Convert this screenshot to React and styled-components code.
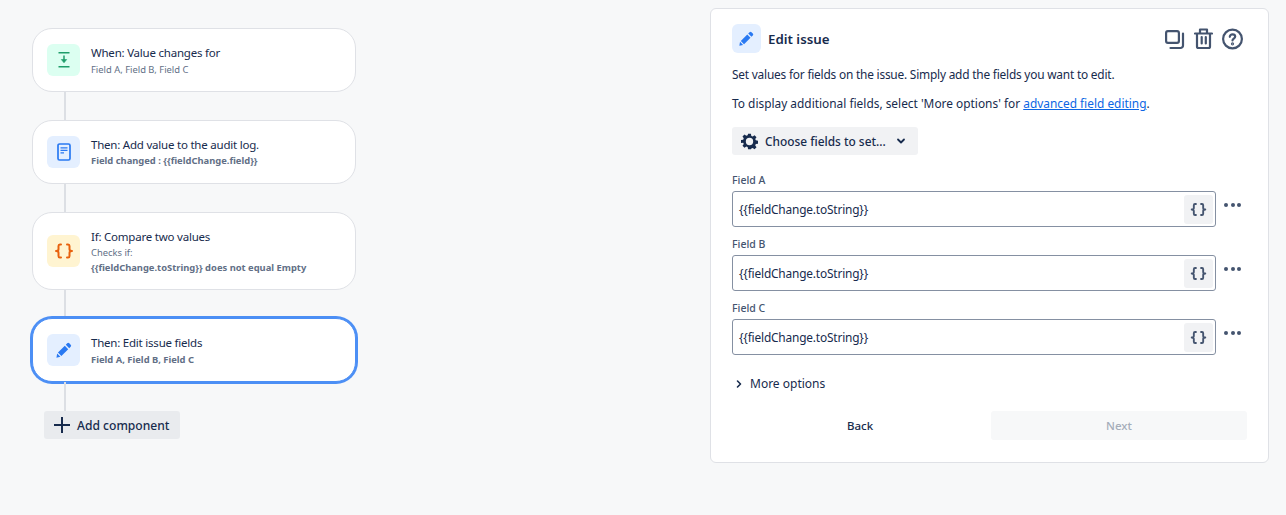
import React from "react";
import styled, { createGlobalStyle } from "styled-components";

const Global = createGlobalStyle`
  html, body { margin: 0; padding: 0; background: #f7f8f9; }
  body { font-family: "Noto Sans", "Open Sans", sans-serif; color: #172b4d; }
  * { box-sizing: border-box; }
`;

const Page = styled.div`
  display: flex;
  width: 1286px;
  height: 515px;
  overflow: hidden;
  background: #f7f8f9;
`;

const Flow = styled.div`
  width: 710px;
  flex: none;
  padding: 28px 0 0 32px;
  display: flex;
  flex-direction: column;
  align-items: flex-start;
`;

const Card = styled.div`
  width: 324px;
  height: ${(p) => p.$h || 64}px;
  background: #fff;
  border-radius: 20px;
  border: 1px solid ${(p) => (p.$active ? "#4c8ff5" : "#dfe1e6")};
  box-shadow: ${(p) => (p.$active ? "0 0 0 2px #4c8ff5" : "none")};
  display: flex;
  align-items: center;
  padding: 0 14px;
  gap: 11px;
`;

const IconTile = styled.div`
  width: ${(p) => p.$size || 33}px;
  height: ${(p) => p.$size || 32}px;
  border-radius: 6px;
  background: ${(p) => p.$bg};
  display: flex;
  align-items: center;
  justify-content: center;
  flex: none;
`;

const CardText = styled.div`
  display: flex;
  flex-direction: column;
  gap: ${(p) => p.$gap ?? 2}px;
  min-width: 0;
`;

const CardTitle = styled.div`
  font-size: 11.5px;
  letter-spacing: -0.22px;
  line-height: 17px;
  color: #172b4d;
  white-space: nowrap;
`;

const CardSub = styled.div`
  font-size: 9.4px;
  line-height: 14px;
  color: #626f86;
  font-weight: ${(p) => (p.$bold ? 700 : 400)};
  white-space: nowrap;
`;

const Connector = styled.div`
  width: 2px;
  height: ${(p) => p.$h || 28}px;
  margin-left: 32px;
  background: #dcdfe4;
`;

const AddButton = styled.button`
  margin-left: 12px;
  width: 136px;
  height: 28px;
  border: 0;
  border-radius: 3px;
  background: #e9ebee;
  color: #172b4d;
  display: flex;
  align-items: center;
  gap: 6px;
  padding: 0 0 0 9px;
  font: 500 12.1px "Noto Sans", sans-serif;
`;

const Panel = styled.section`
  width: 559px;
  height: 455px;
  margin-top: 8px;
  background: #fff;
  border: 1px solid #dfe1e6;
  border-radius: 6px;
  padding: 15px 21px 0 21px;
  display: flex;
  flex-direction: column;
`;

const PanelHeader = styled.div`
  display: flex;
  align-items: center;
  height: 29px;
  gap: 7px;
`;

const PanelTitle = styled.h2`
  margin: 0;
  font-size: 13.3px;
  font-weight: 600;
  color: #172b4d;
  flex: 1;
`;

const HeaderActions = styled.div`
  display: flex;
  align-items: center;
  gap: 8px;
  margin-right: 3px;
`;

const Para = styled.p`
  margin: 13px 0 0;
  font-size: 11.9px;
  letter-spacing: ${(p) => (p.$tight ? "-0.21px" : "0")};
  line-height: 16px;
  color: #172b4d;
`;

const Link = styled.a`
  color: #0c66e4;
  text-decoration: underline;
`;

const ChooseButton = styled.button`
  margin-top: 16px;
  width: 186px;
  height: 28px;
  border: 0;
  border-radius: 3px;
  background: #f1f2f4;
  color: #172b4d;
  display: flex;
  align-items: center;
  padding: 0 0 1px 9px;
  gap: 7px;
  font: 500 11.9px "Noto Sans", sans-serif;
`;

const ChooseIcon = styled.svg`
  flex: none;
  margin-top: 1px;
`;

const FieldList = styled.div`
  margin-top: 17px;
  display: flex;
  flex-direction: column;
  gap: 9px;
`;

const Field = styled.div`
  display: flex;
  flex-direction: column;
  gap: 3px;
`;

const FieldLabel = styled.label`
  font-size: 10.5px;
  line-height: 16px;
  font-weight: 500;
  color: #44546f;
`;

const FieldRow = styled.div`
  display: flex;
  align-items: flex-start;
`;

const InputBox = styled.div`
  width: 484px;
  height: 36px;
  border: 1px solid #8590a2;
  border-radius: 3px;
  display: flex;
  align-items: center;
  justify-content: space-between;
  padding: 0 2px 0 6px;
  font-size: 11.9px;
  letter-spacing: -0.18px;
  color: #172b4d;
`;

const SmartButton = styled.div`
  width: 29px;
  height: 29px;
  border-radius: 3px;
  background: #f1f2f4;
  color: #44546f;
  display: flex;
  align-items: center;
  justify-content: center;
`;

const Dots = styled.div`
  margin: 12px 0 0 8px;
  display: flex;
  gap: 2.5px;
`;

const Dot = styled.span`
  width: 4px;
  height: 4px;
  border-radius: 50%;
  background: #44546f;
`;

const MoreOptions = styled.div`
  margin-top: 20px;
  display: flex;
  align-items: center;
  gap: 7px;
  padding-left: 3px;
  height: 17px;
  font-size: 12px;
  color: #172b4d;
`;

const Footer = styled.div`
  margin-top: 19px;
  display: flex;
  gap: 3px;
  width: 515px;
`;

const FooterButton = styled.button`
  flex: 1;
  height: 29px;
  border: 0;
  border-radius: 3px;
  background: ${(p) => (p.disabled ? "#f7f8f9" : "transparent")};
  color: ${(p) => (p.disabled ? "#a5adba" : "#172b4d")};
  font: 500 11.5px "Noto Sans", sans-serif;
`;

const Pencil = ({ size = 18 }) => (
  <svg width={size} height={size} viewBox="0 0 20 20">
    <path fill="#2979f2" d="M13.6 2.6a1.6 1.6 0 0 1 2.3 0l1.5 1.5a1.6 1.6 0 0 1 0 2.3l-1.6 1.6L12 4.2zM10.9 5.3l3.8 3.8-7.6 7.6-3.800-3.800zM2.400 13.900l3.600 3.600-4.400 1z" />
  </svg>
);

const Braces = ({ color, size = 20, sw = 2 }) => (
  <svg width={size} height={size} viewBox="0 0 20 20" fill="none" stroke={color} strokeWidth={sw} strokeLinecap="round" strokeLinejoin="round">
    <path d="M7 3.500H5.900C5 3.500 4.500 4 4.500 5v3.300c0 1-.7 1.700-2.500 1.700 1.800 0 2.500.7 2.500 1.700V15c0 1 .5 1.500 1.400 1.500H7" />
    <path d="M13 3.500h1.100c.9 0 1.400.5 1.400 1.500v3.300c0 1 .7 1.700 2.500 1.700-1.800 0-2.500.7-2.500 1.700V15c0 1-.5 1.500-1.400 1.500H13" />
  </svg>
);

const fieldNames = ["Field A", "Field B", "Field C"];

export default function App() {
  return (
    <Page>
      <Global />
      <Flow>
        <Card>
          <IconTile $bg="#dcfff1">
            <svg width="20" height="20" viewBox="0 0 20 20" fill="none" stroke="#1f9d6a" strokeWidth="1.500">
              <path d="M4.500 2.800h11M4.500 16.800h11" />
              <path d="M10 5.500v5" />
              <path d="M7.300 9.500h5.400L10 12.800z" fill="#1f9d6a" strokeWidth="0.600" />
            </svg>
          </IconTile>
          <CardText>
            <CardTitle>When: Value changes for</CardTitle>
            <CardSub>Field A, Field B, Field C</CardSub>
          </CardText>
        </Card>
        <Connector />
        <Card>
          <IconTile $bg="#e4efff">
            <svg width="20" height="20" viewBox="0 0 20 20" fill="none" stroke="#2979f2" strokeWidth="1.700">
              <rect x="4" y="2" width="12" height="16" rx="1.500" />
              <path d="M6.500 5.800h7M6.500 8.300h7M6.500 10.800h3.500" strokeWidth="1.300" />
            </svg>
          </IconTile>
          <CardText $gap={1}>
            <CardTitle>Then: Add value to the audit log.</CardTitle>
            <CardSub $bold>Field changed : {"{{fieldChange.field}}"}</CardSub>
          </CardText>
        </Card>
        <Connector />
        <Card $h={78}>
          <IconTile $bg="#fff4d1">
            <Braces color="#e8620e" />
          </IconTile>
          <CardText $gap={1}>
            <CardTitle>If: Compare two values</CardTitle>
            <CardSub>Checks if:</CardSub>
            <CardSub $bold>{"{{fieldChange.toString}}"} does not equal Empty</CardSub>
          </CardText>
        </Card>
        <Connector />
        <Card $active>
          <IconTile $bg="#e4efff">
            <Pencil />
          </IconTile>
          <CardText>
            <CardTitle>Then: Edit issue fields</CardTitle>
            <CardSub $bold>Field A, Field B, Field C</CardSub>
          </CardText>
        </Card>
        <Connector $h={29} />
        <AddButton>
          <svg width="18" height="18" viewBox="0 0 18 18" stroke="#172b4d" strokeWidth="2">
            <path d="M9 1v16M1 9h16" />
          </svg>
          Add component
        </AddButton>
      </Flow>
      <Panel>
        <PanelHeader>
          <IconTile $bg="#e4efff" $size={29}>
            <Pencil size={17} />
          </IconTile>
          <PanelTitle>Edit issue</PanelTitle>
          <HeaderActions>
            <svg width="22" height="24" viewBox="0 0 22 24" fill="none" stroke="#44546f" strokeWidth="2.200" strokeLinejoin="round">
              <rect x="2.100" y="4.100" width="12.800" height="11.800" rx="1.800" />
              <path d="M19 6.500V18.500a2.500 2.500 0 0 1-2.500 2.500H6.500" strokeLinecap="round" />
            </svg>
            <svg width="19" height="24" viewBox="0 0 19 24" fill="none" stroke="#44546f" strokeWidth="2.200" strokeLinecap="round" strokeLinejoin="round">
              <path d="M1 6.500h17M6 6.500V2.500h7v4M3 6.500V19.500c0 1 .7 1.500 1.500 1.500h10c.8 0 1.500-.5 1.500-1.500V6.500" />
              <path d="M7.700 10v6.500M11.800 10v6.500" />
            </svg>
            <svg width="23" height="24" viewBox="0 0 23 24" fill="none" stroke="#44546f" strokeWidth="2.200" strokeLinecap="round">
              <circle cx="11.500" cy="12" r="9.400" />
              <path d="M8.800 9.800c0-1.500 1.200-2.500 2.700-2.500s2.700 1 2.700 2.300c0 2-2.700 2-2.700 3.900" />
              <circle cx="11.500" cy="16.800" r="0.500" fill="#44546f" />
            </svg>
          </HeaderActions>
        </PanelHeader>
        <Para $tight>Set values for fields on the issue. Simply add the fields you want to edit.</Para>
        <Para>
          To display additional fields, select 'More options' for <Link href="#">advanced field editing</Link>.
        </Para>
        <ChooseButton>
          <ChooseIcon width="17" height="17" viewBox="0 0 24 24" fill="#172b4d">
            <path fillRule="evenodd" d="M10 1h4l.6 3.100 1.900.8 2.600-1.800 2.800 2.800-1.800 2.600.8 1.900 3.100.6v4l-3.100.6-.8 1.900 1.800 2.600-2.800 2.800-2.600-1.800-1.900.8L14 23h-4l-.6-3.100-1.900-.8-2.600 1.800-2.800-2.800 1.800-2.600-.8-1.900L0 14v-4l3.100-.6.8-1.900-1.800-2.600 2.800-2.800 2.600 1.800 1.900-.8zM12 6.800a5.200 5.200 0 1 0 0 10.400 5.200 5.200 0 0 0 0-10.400z" />
          </ChooseIcon>
          Choose fields to set...
          <ChooseIcon width="16" height="16" viewBox="0 0 16 16" fill="none" stroke="#172b4d" strokeWidth="1.800" strokeLinecap="round" strokeLinejoin="round">
            <path d="M5 6.500l3 3 3-3" />
          </ChooseIcon>
        </ChooseButton>
        <FieldList>
          {fieldNames.map((name) => (
            <Field key={name}>
              <FieldLabel>{name}</FieldLabel>
              <FieldRow>
                <InputBox>
                  {"{{fieldChange.toString}}"}
                  <SmartButton>
                    <Braces color="#44546f" size={17} sw={2.200} />
                  </SmartButton>
                </InputBox>
                <Dots>
                  <Dot />
                  <Dot />
                  <Dot />
                </Dots>
              </FieldRow>
            </Field>
          ))}
        </FieldList>
        <MoreOptions>
          <svg width="8" height="10" viewBox="0 0 8 10" fill="none" stroke="#172b4d" strokeWidth="1.600" strokeLinecap="round" strokeLinejoin="round">
            <path d="M2.500 2l3 3-3 3" />
          </svg>
          More options
        </MoreOptions>
        <Footer>
          <FooterButton>Back</FooterButton>
          <FooterButton disabled>Next</FooterButton>
        </Footer>
      </Panel>
    </Page>
  );
}
